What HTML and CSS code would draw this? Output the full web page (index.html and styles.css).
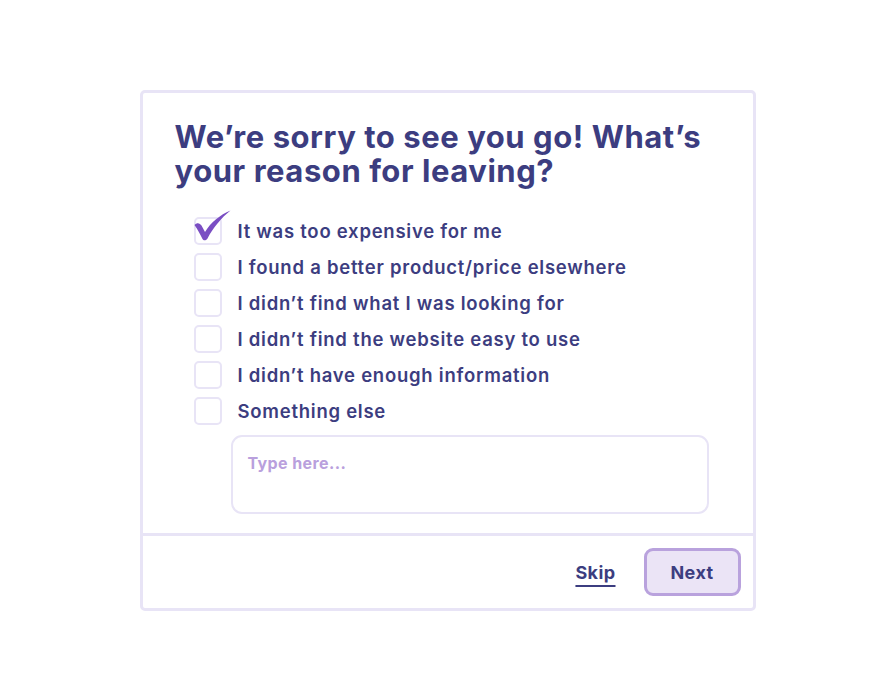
FILE: index.html
```html
<!DOCTYPE html>
<html lang="en">
<head>
	<meta charset="UTF-8">
	<title>Exit survey</title>
	<link rel="stylesheet" href="styles.css">
</head>
<body>
	<!-- survey card -->
	<div class="card">
		<div class="card_body">
			<h1 class="title">We’re sorry to see you go! What’s your reason for leaving?</h1>
			<ul class="options">
				<li class="option">
					<span class="box checked">
						<svg class="tick" width="44" height="36" viewBox="0 0 44 36">
							<path d="M4.5 18 C7 15 10 16 11.5 18.5 L15 25 C21 15 30 8 40.5 3.5 C31 11 23 21 17.5 31.5 C16.5 33.5 13.5 34 12.5 32 C10 27 7.5 22 4.5 18 Z" fill="#7a4ec3"/>
						</svg>
					</span>
					<span class="label">It was too expensive for me</span>
				</li>
				<li class="option"><span class="box"></span><span class="label">I found a better product/price elsewhere</span></li>
				<li class="option"><span class="box"></span><span class="label">I didn’t find what I was looking for</span></li>
				<li class="option"><span class="box"></span><span class="label">I didn’t find the website easy to use</span></li>
				<li class="option"><span class="box"></span><span class="label">I didn’t have enough information</span></li>
				<li class="option"><span class="box"></span><span class="label">Something else</span></li>
			</ul>
			<textarea class="other" placeholder="Type here..."></textarea>
		</div>
		<!-- footer -->
		<div class="card_foot">
			<a class="skip" href="#">Skip</a>
			<button class="next">Next</button>
		</div>
	</div>
</body>
</html>
```

FILE: styles.css
```css
body{
	margin:0;
	background:#fff;
	font-family:"Inter","Liberation Sans",sans-serif;
	color:#3c3d80;
}
.card{
	width:610px;
	margin:90px auto 0;
	border:3px solid #e8e4f6;
	border-radius:5px;
}
.card_body{
	padding:27px 20px 19px 32px;
}
.title{
	margin:0;
	font-size:31px;
	line-height:34px;
	font-weight:700;
	letter-spacing:0.55px;
}
.options{
	list-style:none;
	margin:25px 0 0;
	padding:0 0 0 19px;
}
.option{
	display:flex;
	align-items:center;
	height:36px;
}
.box{
	position:relative;
	width:24px;
	height:24px;
	border:2px solid #e8e4f6;
	border-radius:5px;
	margin-right:16px;
	flex-shrink:0;
}
.tick{
	position:absolute;
	left:-6px;
	top:-12px;
}
.label{
	font-size:18.5px;
	font-weight:600;
	letter-spacing:0.75px;
}
.other{
	display:block;
	box-sizing:border-box;
	width:478px;
	height:79px;
	margin:6px 0 0 56px;
	padding:16px 15px;
	border:2px solid #e8e4f6;
	border-radius:11px;
	resize:none;
	font-family:inherit;
	font-size:16px;
	font-weight:700;
	letter-spacing:0.4px;
	color:#3c3d80;
	outline:none;
}
.other::placeholder{
	color:#b9a0dd;
}
.card_foot{
	border-top:3px solid #e8e4f6;
	height:72px;
	display:flex;
	align-items:center;
	justify-content:flex-end;
	padding-right:12px;
}
.skip{
	color:#3c3d80;
	font-size:18px;
	font-weight:700;
	letter-spacing:0.4px;
	text-decoration:underline;
	text-decoration-thickness:2px;
	text-underline-offset:6px;
	margin-right:28px;
}
.next{
	width:97px;
	height:48px;
	background:#ebe4f6;
	border:3px solid #b9a2dd;
	border-radius:9px;
	font-family:inherit;
	font-size:18px;
	font-weight:700;
	letter-spacing:0.4px;
	color:#3c3d80;
	cursor:pointer;
}
```
